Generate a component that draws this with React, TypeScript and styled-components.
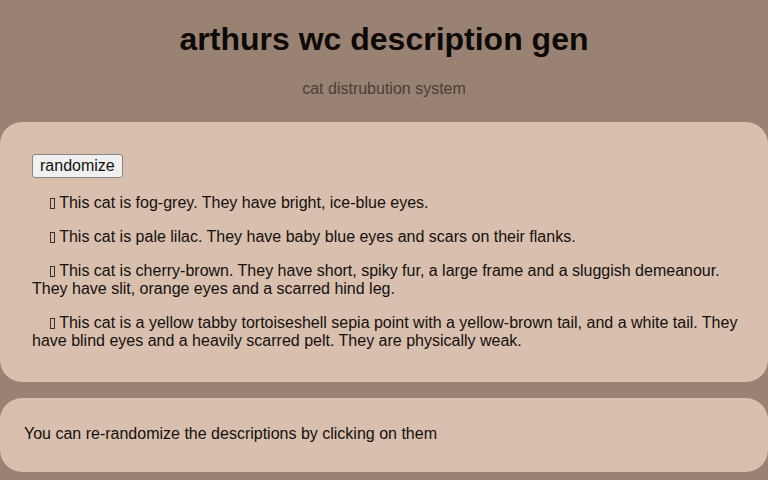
import React, { useState } from "react";
import styled, { createGlobalStyle } from "styled-components";

const Global = createGlobalStyle`
  html, body { margin: 0; padding: 0; }
  body {
    background: #9a8273;
    font-family: "Liberation Sans", Arial, sans-serif;
    color: #15100d;
  }
`;

const Page = styled.div`
  display: flex;
  flex-direction: column;
  gap: 16px;
  padding-bottom: 16px;
`;

const Header = styled.header`
  display: flex;
  flex-direction: column;
  align-items: center;
  padding-top: 21px;
  padding-bottom: 8px;
`;

const Title = styled.h1`
  margin: 0;
  font-size: 32px;
  line-height: 37px;
  font-weight: 700;
  color: #0c0907;
`;

const Subtitle = styled.p`
  margin: 22px 0 0;
  font-size: 16px;
  line-height: 18px;
  color: #4a3e37;
`;

const Card = styled.section<{ $pad: string }>`
  background: #d8bfae;
  border-radius: 22px;
  padding: ${(p) => p.$pad};
  display: flex;
  flex-direction: column;
  align-items: flex-start;
  gap: 16px;
`;

const Button = styled.button`
  font-family: "Liberation Sans", Arial, sans-serif;
  font-size: 16px;
  line-height: 18px;
  padding: 1px 7px;
  height: 24px;
  color: #111;
  background: #f0f0f0;
  border: 1px solid #858585;
  border-radius: 3px;
  cursor: pointer;
`;

const Line = styled.p`
  margin: 0;
  font-size: 16px;
  line-height: 18px;
  text-indent: 18px;
  cursor: pointer;
`;

/* placeholder box the cat symbol falls back to */
const Glyph = styled.span`
  display: inline-block;
  box-sizing: border-box;
  width: 5px;
  height: 11px;
  margin-right: 0;
  border: 1px solid #3a302a;
  vertical-align: -1px;
  text-indent: 0;
`;

const Note = styled.p`
  margin: 0;
  font-size: 16px;
  line-height: 18px;
`;

const descriptions = [
  "This cat is fog-grey. They have bright, ice-blue eyes.",
  "This cat is pale lilac. They have baby blue eyes and scars on their flanks.",
  "This cat is cherry-brown. They have short, spiky fur, a large frame and a sluggish demeanour. They have slit, orange eyes and a scarred hind leg.",
  "This cat is a yellow tabby tortoiseshell sepia point with a yellow-brown tail, and a white tail. They have blind eyes and a heavily scarred pelt. They are physically weak.",
];

export default function App() {
  const [cats] = useState(descriptions);
  return (
    <>
      <Global />
      <Page>
        <Header>
          <Title>arthurs wc description gen</Title>
          <Subtitle>cat distrubution system</Subtitle>
        </Header>
        <Card $pad="32px 28px 32px 32px">
          <Button>randomize</Button>
          {cats.map((c, i) => (
            <Line key={i}>
              <Glyph aria-hidden />
              {" " + c}
            </Line>
          ))}
        </Card>
        <Card $pad="27px 24px 29px">
          <Note>You can re-randomize the descriptions by clicking on them</Note>
        </Card>
      </Page>
    </>
  );
}
